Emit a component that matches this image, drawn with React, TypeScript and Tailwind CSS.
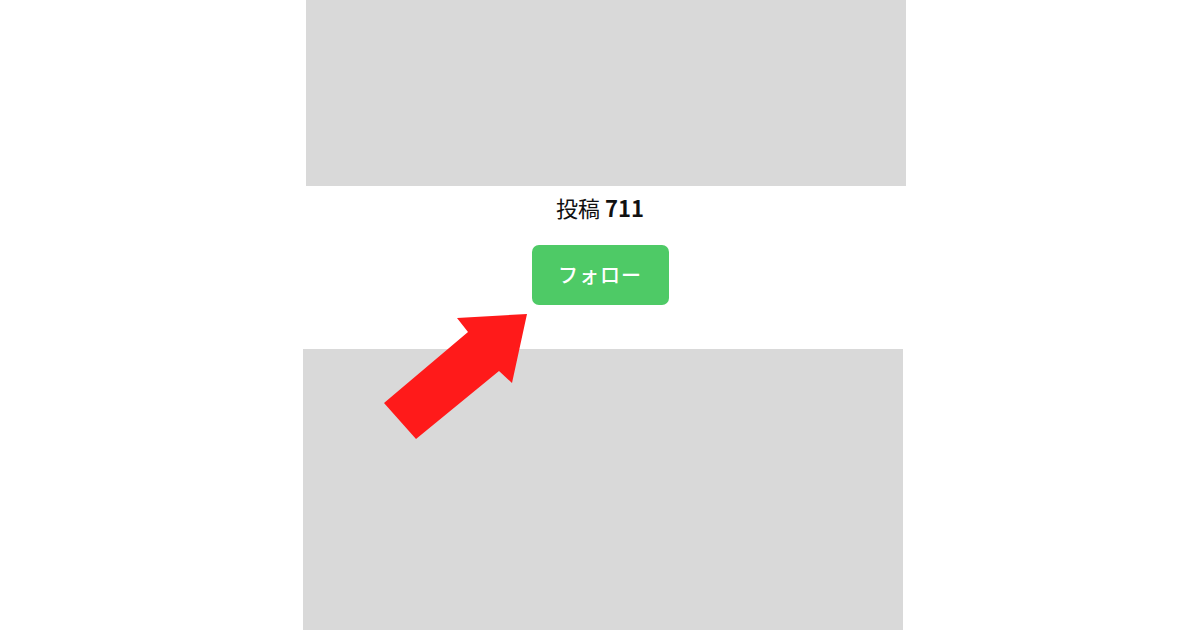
export default function App() {
  return (
    <div
      className="relative w-[1200px] h-[630px] overflow-hidden bg-white"
      style={{ fontFamily: '"Noto Sans CJK JP", "Noto Sans", sans-serif' }}
    >
      <div className="flex flex-col">
        <div className="ml-[306px] w-[600px] h-[186px] bg-[#d9d9d9]" />
        <div className="flex justify-center pt-[5px] h-[44px] text-[22px] leading-[32px] text-[#111]">
          <span>
            投稿 <span className="font-bold">711</span>
          </span>
        </div>
        <div className="flex justify-center mt-[15px]">
          <button className="w-[137px] h-[60px] rounded-[7px] bg-[#4eca66] text-white text-[20px] font-medium tracking-[1px]">
            フォロー
          </button>
        </div>
        <div className="ml-[303px] mt-[44px] w-[600px] h-[281px] bg-[#d9d9d9]" />
      </div>
      {/* pointer arrow aimed at the follow button */}
      <svg className="absolute left-0 top-0" width="1200" height="630" viewBox="0 0 1200 630">
        <polygon
          points="527,314 512,383 499,371 416,439 384,403 468,332 457,318"
          fill="#ff1a1a"
        />
      </svg>
    </div>
  );
}
